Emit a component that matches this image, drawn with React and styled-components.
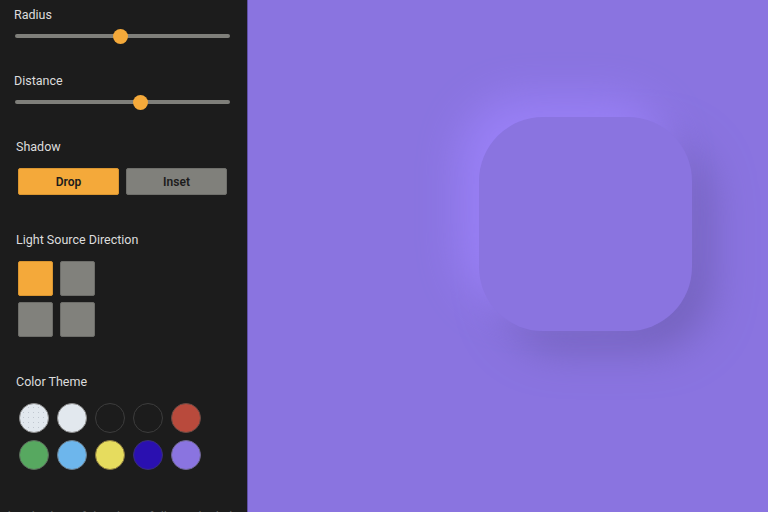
import React from "react";
import styled, { createGlobalStyle } from "styled-components";

const Global = createGlobalStyle`
  html, body { margin: 0; padding: 0; overflow: hidden; height: 100%; }
  body { font-family: Roboto, "Liberation Sans", sans-serif; background: #1c1c1c; }
  #root { height: 100%; }
`;

const Page = styled.div`
  display: flex;
  height: 100vh;
  width: 100vw;
  overflow: hidden;
`;

const Sidebar = styled.aside`
  flex: 0 0 247px;
  background: #1c1c1c;
  border-right: 1px solid #5f4fa3;
  display: flex;
  flex-direction: column;
  padding-top: 7px;
  overflow: hidden;
`;

const Section = styled.section`
  display: flex;
  flex-direction: column;
  gap: ${(p) => p.$gap}px;
  margin-bottom: ${(p) => p.$after}px;
`;

const Label = styled.div`
  color: #dcdcdc;
  font-size: 12.5px;
  line-height: 16px;
  padding-left: ${(p) => p.$indent || 15}px;
`;

const Track = styled.div`
  position: relative;
  margin: 0 17px 0 15px;
  height: 15px;
  display: flex;
  align-items: center;
`;

const Rail = styled.div`
  flex: 1;
  height: 4px;
  border-radius: 2px;
  background: #7f7f7a;
`;

const Thumb = styled.div`
  position: absolute;
  top: 0;
  width: 15px;
  height: 15px;
  margin-left: -7.5px;
  border-radius: 50%;
  background: #f4a93a;
`;

const Slider = ({ value }) => (
  <Track>
    <Rail />
    <Thumb style={{ left: `calc(7.5px + (100% - 15px) * ${value})` }} />
  </Track>
);

const ButtonRow = styled.div`
  display: flex;
  gap: 7px;
  padding-left: 18px;
`;

const Toggle = styled.button`
  width: 101px;
  height: 27px;
  border: 1px solid ${(p) => (p.$active ? "#d99530" : "#6f6f6b")};
  border-radius: 2px;
  background: ${(p) => (p.$active ? "#f4a93a" : "#80807b")};
  color: #1c1c1c;
  font-family: Roboto, "Liberation Sans", sans-serif;
  font-size: 12px;
  font-weight: 600;
  padding: 0;
`;

const DirGrid = styled.div`
  display: grid;
  grid-template-columns: repeat(2, 35px);
  grid-auto-rows: 35px;
  gap: 6px 7px;
  padding-left: 18px;
`;

const DirCell = styled.div`
  border-radius: 2px;
  border: 1px solid ${(p) => (p.$active ? "#d99530" : "#6d6d69")};
  background: ${(p) => (p.$active ? "#f4a93a" : "#81817c")};
`;

const Swatches = styled.div`
  display: grid;
  grid-template-columns: repeat(5, 30px);
  grid-auto-rows: 30px;
  gap: 7px 8px;
  padding-left: 19px;
`;

const Swatch = styled.div`
  border-radius: 50%;
  box-sizing: border-box;
  background: ${(p) => p.$color};
  border: 1.5px solid ${(p) => p.$ring || "#7a7a7a"};
  ${(p) =>
    p.$dotted &&
    `background-image: radial-gradient(circle, #c0c7d0 0.7px, transparent 1px);
     background-size: 5px 5px;
     background-position: 1px 1px;`}
`;

const Footer = styled.p`
  margin: 0;
  color: #5c5c5c;
  font-size: 13px;
  line-height: 16px;
  white-space: nowrap;
`;

const Stage = styled.main`
  flex: 1;
  background: #8a74e0;
  display: flex;
  align-items: flex-start;
  padding: 117px 0 0 231px;
`;

const Shape = styled.div`
  flex: 0 0 213px;
  width: 213px;
  height: 214px;
  border-radius: 64px;
  background: #8a74e0;
  box-shadow: -20px -20px 40px #9980f6, 20px 20px 40px #7563be;
`;

const colors = [
  { c: "#e2e8ee", dotted: true, ring: "#8c8c8c" },
  { c: "#e2e8ee", ring: "#8c8c8c" },
  { c: "transparent", ring: "#3c3c3c" },
  { c: "transparent", ring: "#3c3c3c" },
  { c: "#b94a3c", ring: "#6a4a44" },
  { c: "#57a860", ring: "#5b6b5c" },
  { c: "#6db6ec", ring: "#6b7f8e" },
  { c: "#e6dc5e", ring: "#8a7a40" },
  { c: "#2a10b0", ring: "#3a3070" },
  { c: "#8a74e0", ring: "#6e6690" },
];

export default function App() {
  return (
    <Page>
      <Global />
      <Sidebar>
        <Section $gap={5.5} $after={29.5}>
          <Label $indent={14}>Radius</Label>
          <Slider value={0.49} />
        </Section>
        <Section $gap={5.5} $after={29.5}>
          <Label $indent={14}>Distance</Label>
          <Slider value={0.59} />
        </Section>
        <Section $gap={13} $after={37}>
          <Label $indent={16}>Shadow</Label>
          <ButtonRow>
            <Toggle $active>Drop</Toggle>
            <Toggle>Inset</Toggle>
          </ButtonRow>
        </Section>
        <Section $gap={13} $after={37}>
          <Label $indent={16}>Light Source Direction</Label>
          <DirGrid>
            <DirCell $active />
            <DirCell />
            <DirCell />
            <DirCell />
          </DirGrid>
        </Section>
        <Section $gap={13} $after={39}>
          <Label $indent={16}>Color Theme</Label>
          <Swatches>
            {colors.map((s, i) => (
              <Swatch key={i} $color={s.c} $ring={s.ring} $dotted={s.dotted} />
            ))}
          </Swatches>
        </Section>
        <Footer>The shadow of the shape follows the light source you pick above.</Footer>
      </Sidebar>
      <Stage>
        <Shape />
      </Stage>
    </Page>
  );
}
